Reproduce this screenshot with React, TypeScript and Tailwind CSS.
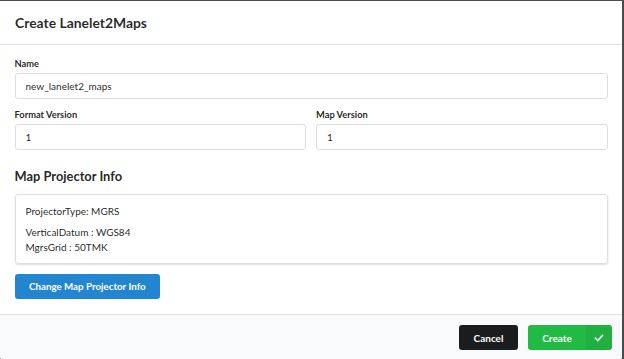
export default function App() {
  return (
    <div className="h-[359px] w-[624px] overflow-hidden bg-[#4b4b4b] pt-px font-['Lato',sans-serif] text-[10px] leading-[1.4285] text-black/[.87]">
      <div className="flex h-[359px] w-[622px] flex-col overflow-hidden rounded-b-[4px] bg-white">
        {/* Header */}
        <div className="border-b border-[#e3e3e3] px-[15px] py-[12.5px] text-[13.9px] font-bold leading-[18px] text-black/[.85]">
          Create Lanelet2Maps
        </div>

        {/* Content */}
        <div className="flex-1 px-[14.5px] pt-[13px]">
          <div className="mb-[10px]">
            <label className="mb-[3px] block text-[9.3px] font-bold leading-[12px]">
              Name
            </label>
            <input
              readOnly
              value="new_lanelet2_maps"
              className="block h-[26px] w-full rounded-[3px] border border-[#dedede] px-[10px] font-['Lato',sans-serif] text-[10px] text-black/[.87] outline-none"
            />
          </div>

          <div className="mb-[10px] grid grid-cols-2 gap-[10px]">
            <div>
              <label className="mb-[3px] block text-[9.3px] font-bold leading-[12px]">
                Format Version
              </label>
              <input
                readOnly
                value="1"
                className="block h-[26px] w-full rounded-[3px] border border-[#dedede] px-[10px] font-['Lato',sans-serif] text-[10px] text-black/[.87] outline-none"
              />
            </div>
            <div>
              <label className="mb-[3px] block text-[9.3px] font-bold leading-[12px]">
                Map Version
              </label>
              <input
                readOnly
                value="1"
                className="block h-[26px] w-full rounded-[3px] border border-[#dedede] px-[10px] font-['Lato',sans-serif] text-[10px] text-black/[.87] outline-none"
              />
            </div>
          </div>

          <h3 className="mt-[18px] mb-[10px] text-[12.86px] font-bold leading-[16px] text-black/[.87]">
            Map Projector Info
          </h3>

          <div className="rounded-[3px] border border-[#dedede] px-[10px] py-[9px] shadow-[0_1px_2px_0_rgba(34,36,38,0.15)]">
            <p className="mb-[7px] leading-[14.3px]">ProjectorType: MGRS</p>
            <p className="leading-[14.3px]">
              VerticalDatum : WGS84
              <br />
              MgrsGrid : 50TMK
            </p>
          </div>

          <button className="mt-[10px] h-[25px] rounded-[3px] bg-[#2185d0] px-[14.5px] text-[9.75px] font-bold leading-none text-white">
            Change Map Projector Info
          </button>
        </div>

        {/* Footer */}
        <div className="flex justify-end gap-[10px] border-t border-[#e3e3e3] bg-[#f9fafb] px-[10px] py-[10px]">
          <button className="h-[25px] w-[59px] rounded-[3px] bg-[#1b1c1d] text-[10px] font-bold leading-none text-white">
            Cancel
          </button>
          <button className="flex h-[25px] w-[84px] items-stretch overflow-hidden rounded-[3px] bg-[#21ba45] text-[10px] font-bold leading-none text-white">
            <span className="flex flex-1 items-center justify-center">Create</span>
            <span className="flex w-[26px] items-center justify-center bg-black/5">
              <svg width="10" height="10" viewBox="0 0 16 16" fill="none">
                <path
                  d="M2.5 8.5l3.5 3.5 7.5-8"
                  stroke="white"
                  strokeWidth="2.6"
                  strokeLinecap="square"
                />
              </svg>
            </span>
          </button>
        </div>
      </div>
    </div>
  );
}
